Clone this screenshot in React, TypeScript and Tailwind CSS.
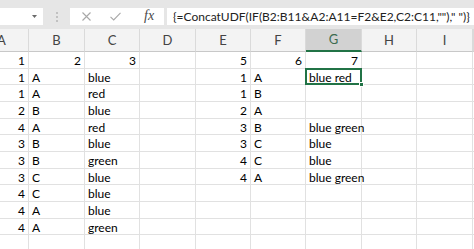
const cols = [
  { key: 'A', w: 'w-[29px]' },
  { key: 'B', w: 'w-[56px]' },
  { key: 'C', w: 'w-[55px]' },
  { key: 'D', w: 'w-[56px]' },
  { key: 'E', w: 'w-[55px]' },
  { key: 'F', w: 'w-[55px]' },
  { key: 'G', w: 'w-[56px]' },
  { key: 'H', w: 'w-[55px]' },
  { key: 'I', w: 'w-[56px]' },
  { key: 'J', w: 'flex-1' },
];

// [value, align] per column; '' = empty
type Cell = [string, 'l' | 'r'];
const e: Cell = ['', 'l'];
const n = (v: string): Cell => [v, 'r'];
const t = (v: string): Cell => [v, 'l'];

const rows: Cell[][] = [
  [n('1'), n('2'), n('3'), e, n('5'), n('6'), n('7'), e, e, e],
  [n('1'), t('A'), t('blue'), e, n('1'), t('A'), t('blue red'), e, e, e],
  [n('1'), t('A'), t('red'), e, n('1'), t('B'), e, e, e, e],
  [n('2'), t('B'), t('blue'), e, n('2'), t('A'), e, e, e, e],
  [n('4'), t('A'), t('red'), e, n('3'), t('B'), t('blue green'), e, e, e],
  [n('3'), t('B'), t('blue'), e, n('3'), t('C'), t('blue'), e, e, e],
  [n('3'), t('B'), t('green'), e, n('4'), t('C'), t('blue'), e, e, e],
  [n('3'), t('C'), t('blue'), e, n('4'), t('A'), t('blue green'), e, e, e],
  [n('4'), t('C'), t('blue'), e, e, e, e, e, e, e],
  [n('4'), t('A'), t('blue'), e, e, e, e, e, e, e],
  [n('4'), t('A'), t('green'), e, e, e, e, e, e, e],
  [e, e, e, e, e, e, e, e, e, e],
];

const cellFont = { fontFamily: 'Lato, "Liberation Sans", sans-serif' };

function FormulaBar() {
  return (
    <div className="flex h-[29px] items-start bg-[#e6e6e6] pt-[8px]">
      <div className="relative h-[17px] w-[43px] bg-white">
        <svg className="absolute left-[32px] top-[7px]" width="5" height="3" viewBox="0 0 5 3">
          <path d="M0 0h5L2.5 3z" fill="#6a6a6a" />
        </svg>
      </div>
      <div className="flex w-[27px] flex-col items-center gap-[2px] pt-[4px]">
        <span className="h-[2px] w-[2px] rounded-full bg-[#b4b4b4]" />
        <span className="h-[2px] w-[2px] rounded-full bg-[#b4b4b4]" />
        <span className="h-[2px] w-[2px] rounded-full bg-[#b4b4b4]" />
      </div>
      <div className="relative h-[17px] w-[94px] bg-white">
        <svg className="absolute left-[12px] top-[4px]" width="9" height="9" viewBox="0 0 9 9">
          <path d="M0.5 0.5l8 8M8.5 0.5l-8 8" stroke="#a8a8a8" strokeWidth="1.1" />
        </svg>
        <svg className="absolute left-[40px] top-[4px]" width="11" height="9" viewBox="0 0 11 9">
          <path d="M0.5 4.8l3.2 3.2L10.5 0.8" stroke="#a8a8a8" strokeWidth="1.1" fill="none" />
        </svg>
        <span
          className="absolute left-[74px] top-[-1px] text-[14px] italic leading-[17px] text-[#4a4a4a]"
          style={{ fontFamily: '"Liberation Serif", serif' }}
        >
          fx
        </span>
      </div>
      <div
        className="ml-[3px] h-[17px] flex-1 whitespace-nowrap bg-white pl-[6px] text-[12px] leading-[17px] text-[#222]"
        style={cellFont}
      >
        {'{=ConcatUDF(IF(B2:B11&A2:A11=F2&E2,C2:C11,""),"  ")}'.replace('"  "', '" "')}
      </div>
    </div>
  );
}

function HeaderRow() {
  return (
    <div className="flex h-[23px] bg-[#f3f3f3]" style={cellFont}>
      {cols.map((c, i) => {
        const sel = c.key === 'G';
        return (
          <div
            key={c.key}
            className={`${c.w} flex shrink-0 items-center border-r border-[#dadada] pt-[1px] text-[13px] ${
              sel ? 'border-b-2 border-b-[#217346] bg-[#d2d2d2] text-[#3d6b50]' : 'border-b border-b-[#c8c8c8] text-[#444]'
            } ${i === 0 ? 'justify-start' : 'justify-center'}`}
          >
            {c.key === 'J' ? '' : i === 0 ? <span className="-ml-[3px]">A</span> : c.key}
          </div>
        );
      })}
    </div>
  );
}

export default function App() {
  return (
    <div className="h-[249px] w-[474px] overflow-hidden bg-white">
      <FormulaBar />
      <HeaderRow />
      <div style={cellFont}>
        {rows.map((r, ri) => (
          <div key={ri} className="flex h-[16.67px]">
            {cols.map((c, ci) => {
              const [v, a] = r[ci];
              const selected = ri === 1 && c.key === 'G';
              return (
                <div
                  key={c.key}
                  className={`${c.w} relative shrink-0 border-b border-r border-[#e1e1e1] text-[12px] leading-[17px] text-black ${
                    a === 'r' ? 'pr-[3px] text-right' : 'pl-[3px]'
                  }`}
                >
                  <span className="relative z-10 whitespace-nowrap">{v}</span>
                  {selected && (
                    <div className="absolute -left-[1px] -top-[1px] bottom-[-1px] right-[-1px] z-20 border-2 border-[#217346]">
                      <span className="absolute -bottom-[4px] -right-[4px] h-[5px] w-[5px] border border-white bg-[#217346]" />
                    </div>
                  )}
                </div>
              );
            })}
          </div>
        ))}
      </div>
    </div>
  );
}
